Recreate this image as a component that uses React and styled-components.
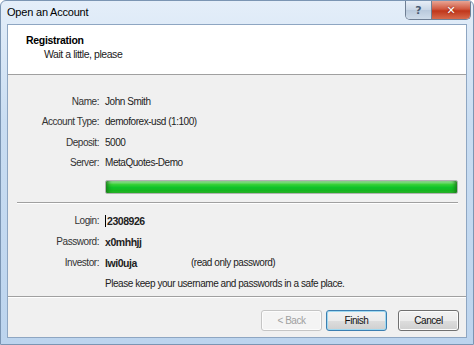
import React from 'react';
import styled, { createGlobalStyle } from 'styled-components';

const GlobalStyle = createGlobalStyle`
  html, body {
    margin: 0;
    padding: 0;
    background: #ffffff;
  }
  body {
    font-family: "Liberation Sans", Arial, sans-serif;
    font-size: 10px;
    letter-spacing: -0.45px;
    color: #1a1a1a;
  }
`;

const Window = styled.div`
  width: 474px;
  height: 345px;
  box-sizing: border-box;
  display: flex;
  flex-direction: column;
  background: linear-gradient(180deg, #e4eef9 0%, #c9ddf2 35%, #bcd4ee 100%);
  border: 1px solid #7b95b3;
  border-radius: 6px 6px 0 0;
  overflow: hidden;
`;

const TitleBar = styled.div`
  height: 23px;
  display: flex;
  align-items: flex-start;
  justify-content: space-between;
  padding-left: 6px;
`;

const Title = styled.div`
  font-size: 11px;
  letter-spacing: -0.2px;
  color: #000;
  margin-top: 5px;
`;

const Caption = styled.div`
  display: flex;
  margin-right: 2px;
  border: 1px solid #6f7f94;
  border-top: none;
  border-radius: 0 0 5px 5px;
  overflow: hidden;
  height: 18px;
`;

const CapButton = styled.div`
  width: ${p => p.$w}px;
  display: flex;
  align-items: center;
  justify-content: center;
  font-family: "DejaVu Sans", sans-serif;
  font-weight: bold;
  font-size: 11px;
  letter-spacing: 0;
  color: ${p => (p.$close ? '#fff' : '#4a5b72')};
  background: ${p => p.$close
    ? 'linear-gradient(180deg, #e8a493 0%, #d0583f 45%, #c0361a 55%, #d66b4d 100%)'
    : 'linear-gradient(180deg, #e7eef7 0%, #c9d6e6 50%, #b9c9dc 51%, #cfdcea 100%)'};
  border-left: ${p => (p.$close ? '1px solid #6f7f94' : 'none')};
  text-shadow: ${p => (p.$close ? '0 0 2px #7a1a08' : 'none')};
`;

const Client = styled.div`
  flex: 1;
  margin: 0 6px 6px 6px;
  border: 1px solid #8ea6c2;
  background: #f0f0f0;
  display: flex;
  flex-direction: column;
`;

const Header = styled.div`
  height: 50px;
  box-sizing: border-box;
  background: #fff;
  border-bottom: 1px solid #a0a0a0;
  padding: 9px 0 0 18px;
`;

const HeaderTitle = styled.div`
  font-weight: bold;
  font-size: 10.5px;
  letter-spacing: -0.3px;
  color: #000;
`;

const HeaderSub = styled.div`
  margin: 2px 0 0 18px;
  font-size: 10.5px;
  color: #222;
`;

const Body = styled.div`
  flex: 1;
  display: flex;
  flex-direction: column;
  padding: 16px 8px 0 8px;
`;

const Grid = styled.div`
  display: grid;
  grid-template-columns: 83px 1fr;
  column-gap: 6px;
  grid-auto-rows: ${p => p.$row}px;
  align-items: center;
`;

const Label = styled.div`
  text-align: right;
  color: #333;
`;

const Value = styled.div`
  color: #222;
  font-weight: ${p => (p.$bold ? 'bold' : 'normal')};
  font-size: ${p => (p.$bold ? '10.5px' : '10px')};
  display: flex;
  align-items: center;
`;

const Note = styled.span`
  font-weight: normal;
  font-size: 10px;
  margin-left: 54px;
  color: #222;
`;

const ProgressRow = styled.div`
  margin: 7px 0 0 89px;
  height: 12px;
  border: 1px solid #b2b2b2;
  border-radius: 2px;
  background: linear-gradient(180deg, #b8f0b8 0%, #35d035 30%, #0fc22a 55%, #16b81f 80%, #2ec22e 100%);
  box-shadow: inset 4px 0 4px -2px #1a7a1a, inset -4px 0 4px -2px #1a7a1a;
`;

const Divider = styled.div`
  height: 1px;
  background: #a0a0a0;
  border-bottom: 1px solid #fff;
  margin: ${p => p.$margin};
`;

const Footer = styled.div`
  height: 39px;
  box-sizing: border-box;
  padding: 5px 7px 0 0;
  display: flex;
  align-items: center;
  justify-content: flex-end;
  gap: 4px;
`;

const Button = styled.button`
  width: 61px;
  height: 21px;
  font-family: "Liberation Sans", Arial, sans-serif;
  font-size: 10px;
  letter-spacing: -0.45px;
  color: ${p => (p.disabled ? '#a0a0a0' : '#111')};
  border: 1px solid ${p => (p.disabled ? '#c5c5c5' : p.$default ? '#3c7fb1' : '#707070')};
  border-radius: 3px;
  background: ${p => p.disabled
    ? '#f4f4f4'
    : 'linear-gradient(180deg, #f2f2f2 0%, #ebebeb 50%, #dddddd 51%, #cfcfcf 100%)'};
  box-shadow: ${p => (p.$default ? 'inset 0 0 0 1px #9fd8f0' : 'inset 0 0 0 1px #fcfcfc')};
  margin-left: ${p => p.$gap || 0}px;
  padding: 0;
`;

const Caret = styled.span`
  display: inline-block;
  width: 1px;
  height: 12px;
  background: #000;
  margin-right: 1px;
`;

export default function App() {
  return (
    <>
      <GlobalStyle />
      <Window>
        <TitleBar>
          <Title>Open an Account</Title>
          <Caption>
            <CapButton $w={25}>?</CapButton>
            <CapButton $w={38} $close>✕</CapButton>
          </Caption>
        </TitleBar>
        <Client>
          <Header>
            <HeaderTitle>Registration</HeaderTitle>
            <HeaderSub>Wait a little, please</HeaderSub>
          </Header>
          <Body>
            <Grid $row={20.5}>
              <Label>Name:</Label>
              <Value>John Smith</Value>
              <Label>Account Type:</Label>
              <Value>demoforex-usd (1:100)</Value>
              <Label>Deposit:</Label>
              <Value>5000</Value>
              <Label>Server:</Label>
              <Value>MetaQuotes-Demo</Value>
            </Grid>
            <ProgressRow />
            <Divider $margin="8px 0 6px 1px" />
            <Grid $row={21}>
              <Label>Login:</Label>
              <Value $bold><Caret />2308926</Value>
              <Label>Password:</Label>
              <Value $bold>x0mhhjj</Value>
              <Label>Investor:</Label>
              <Value $bold>lwi0uja<Note>(read only password)</Note></Value>
              <span />
              <Value>Please keep your username and passwords in a safe place.</Value>
            </Grid>
          </Body>
          <Divider $margin="0" />
          <Footer>
            <Button disabled>&lt; Back</Button>
            <Button $default>Finish</Button>
            <Button $gap={7}>Cancel</Button>
          </Footer>
        </Client>
      </Window>
    </>
  );
}
